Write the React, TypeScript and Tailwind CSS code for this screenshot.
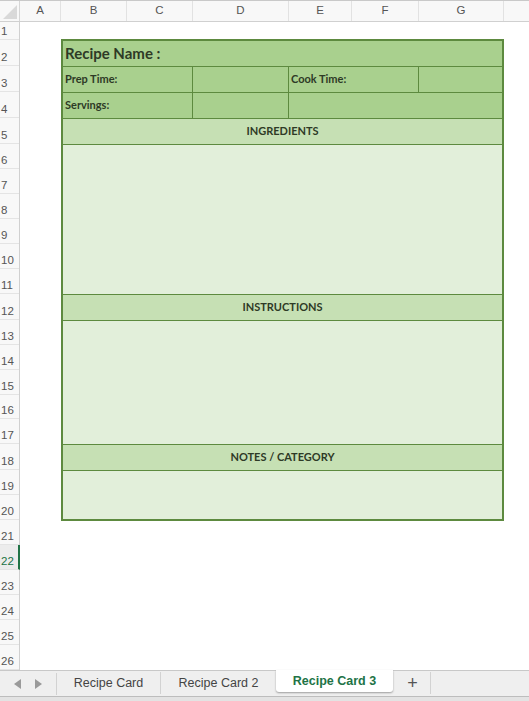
import React from 'react';

const cols = [
  { l: 'A', w: 41 },
  { l: 'B', w: 66 },
  { l: 'C', w: 66 },
  { l: 'D', w: 96 },
  { l: 'E', w: 63 },
  { l: 'F', w: 67 },
  { l: 'G', w: 85 },
];

// row heights taken from the sheet
const rows = [18, 26, 26, 26, 26, 25, 25, 25, 25, 25, 25, 26, 25, 25, 25, 24, 25, 26, 25, 25, 25, 25, 25, 25, 25, 25];

export default function App() {
  return (
    <div className="w-[529px] h-[701px] bg-white overflow-hidden flex flex-col" style={{ fontFamily: '"Liberation Sans", Arial, sans-serif' }}>
      {/* column header */}
      <div className="flex h-[22px] border-t border-[#c9c9c9] border-b border-b-[#d0d0d0] bg-[#f8f8f8] shrink-0">
        <div className="w-[20px] border-r border-[#d6d6d6] relative">
          <div className="absolute right-[2px] bottom-[2px] w-0 h-0 border-l-[14px] border-l-transparent border-b-[14px] border-b-[#d9d9d9]" />
        </div>
        {cols.map((c) => (
          <div key={c.l} style={{ width: c.w }} className="border-r border-[#e2e2e2] flex items-center justify-center text-[11.5px] text-[#555]">
            {c.l}
          </div>
        ))}
        <div className="flex-1" />
      </div>

      <div className="flex flex-1 min-h-0">
        {/* row header */}
        <div className="w-[20px] border-r border-[#d0d0d0] bg-[#f8f8f8] shrink-0 flex flex-col">
          {rows.map((h, i) => (
            <div
              key={i}
              style={{ height: h }}
              className={
                'border-b border-[#e4e4e4] flex items-end pb-[1px] pl-[1px] text-[11.5px] leading-[14px] ' +
                (i === 21 ? 'text-[#217346] bg-[#ececec] border-r-2 border-r-[#217346] -mr-[1px]' : 'text-[#555]')
              }
            >
              {i + 1}
            </div>
          ))}
        </div>

        {/* cells */}
        <div className="flex-1 pt-[17px] pl-[41px]" style={{ fontFamily: 'Lato, "Open Sans", sans-serif' }}>
          <div className="w-[443px] h-[482px] border-2 border-[#5d8a3f] flex flex-col text-[#2e3a26]">
            <div className="h-[25px] bg-[#a9d08e] flex items-center px-[2px] text-[15px] font-bold">Recipe Name :</div>
            <div className="h-[26px] bg-[#a9d08e] border-t border-[#5d8a3f] flex text-[11px] font-bold">
              <div className="w-[130px] border-r border-[#5d8a3f] flex items-center px-[2px]">Prep Time:</div>
              <div className="w-[96px] border-r border-[#5d8a3f]" />
              <div className="w-[130px] border-r border-[#5d8a3f] flex items-center px-[2px]">Cook Time:</div>
              <div className="flex-1" />
            </div>
            <div className="h-[26px] bg-[#a9d08e] border-t border-[#5d8a3f] flex text-[11px] font-bold">
              <div className="w-[130px] border-r border-[#5d8a3f] flex items-center px-[2px]">Servings:</div>
              <div className="w-[96px] border-r border-[#5d8a3f]" />
              <div className="flex-1" />
            </div>
            <div className="h-[26px] bg-[#c6e0b4] border-t border-[#5d8a3f] flex items-center justify-center text-[11px] font-bold">INGREDIENTS</div>
            <div className="h-[150px] bg-[#e2efda] border-t border-[#5d8a3f]" />
            <div className="h-[26px] bg-[#c6e0b4] border-t border-[#5d8a3f] flex items-center justify-center text-[11px] font-bold">INSTRUCTIONS</div>
            <div className="h-[124px] bg-[#e2efda] border-t border-[#5d8a3f]" />
            <div className="h-[26px] bg-[#c6e0b4] border-t border-[#5d8a3f] flex items-center justify-center text-[11px] font-bold">NOTES / CATEGORY</div>
            <div className="flex-1 bg-[#e2efda] border-t border-[#5d8a3f]" />
          </div>
        </div>
      </div>

      {/* sheet tabs */}
      <div className="h-[26px] shrink-0 bg-[#efefef] border-t border-[#c8c8c8] flex items-start text-[12.5px] text-[#444]">
        <div className="w-[57px] h-[22px] flex items-center justify-center gap-[14px] border-r border-[#d2d2d2] mt-[2px]">
          <span className="w-0 h-0 border-y-[5px] border-y-transparent border-r-[7px] border-r-[#9a9a9a]" />
          <span className="w-0 h-0 border-y-[5px] border-y-transparent border-l-[7px] border-l-[#9a9a9a]" />
        </div>
        <div className="w-[104px] h-[22px] flex items-center justify-center border-r border-[#d2d2d2] mt-[1px]">Recipe Card</div>
        <div className="w-[115px] h-[22px] flex items-center justify-center mt-[1px]">Recipe Card 2</div>
        <div className="w-[117px] h-[22px] -mt-px bg-white rounded-b-[3px] shadow-[0_1px_2px_rgba(0,0,0,0.35)] flex items-center justify-center text-[#217346] font-semibold">
          Recipe Card 3
        </div>
        <div className="w-[38px] h-[22px] flex items-center justify-center border-r border-[#d2d2d2] mt-[1px] pl-[2px] text-[18px] text-[#555] font-light">+</div>
      </div>
      <div className="h-[5px] shrink-0 bg-[#e3e3e3] border-t border-[#bdbdbd]" />
    </div>
  );
}
